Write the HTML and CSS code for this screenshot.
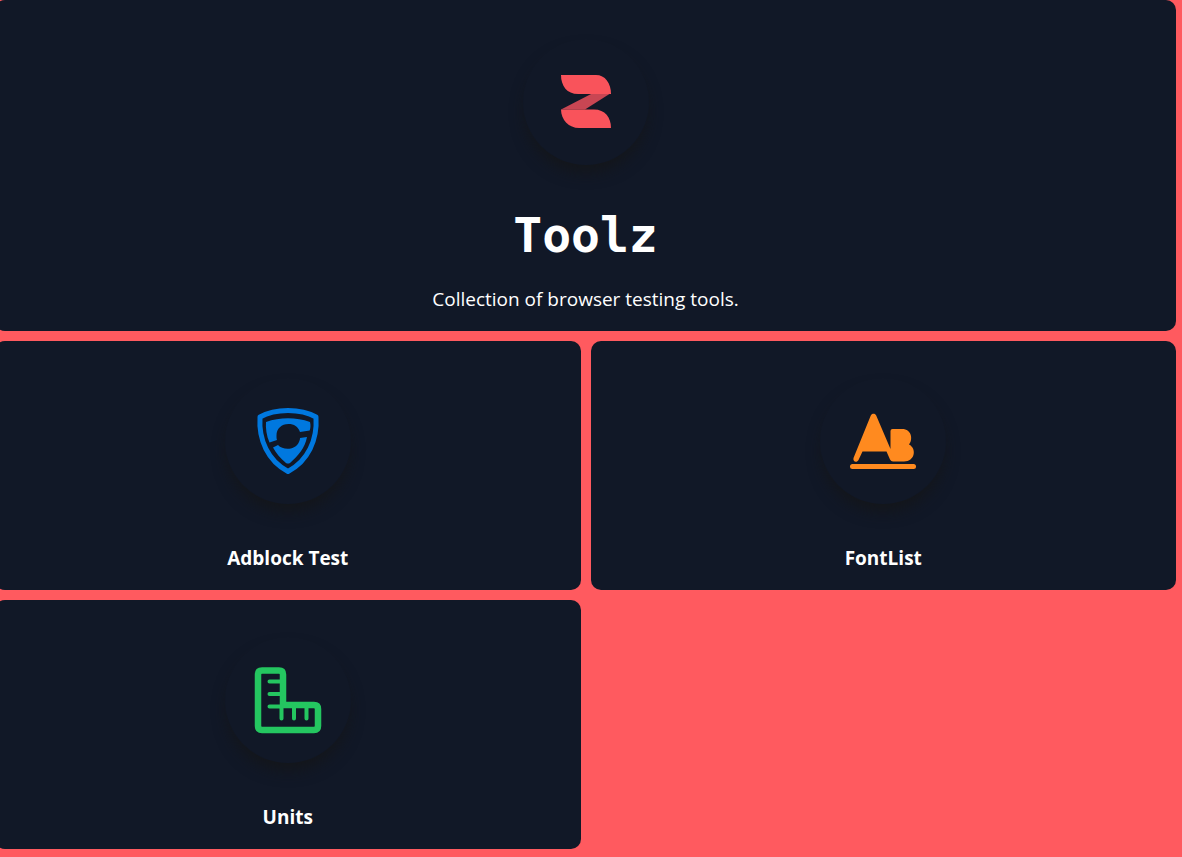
FILE: index.html
```html
<!DOCTYPE html>
<html lang="en">

<head>
  <meta charset="UTF-8">
  <meta name="viewport" content="width=device-width, initial-scale=1.0">
  <title>Toolz</title>
  <link rel="stylesheet" href="styles.css">
</head>

<body>
  <main class="grid">
    <header class="card hero">
      <div class="icon">
        <svg width="50" height="54" viewBox="0 0 50 54" aria-hidden="true">
          <path fill="#c94653" d="M32 18h18L24 34.500H0z" />
          <path fill="#f9535b" d="M0 0h35c9 0 15 8 15 19H17C6 19 0 11 0 0z" />
          <path fill="#f9535b" d="M0 34.500h33c11 0 17 8 17 18.500H18C8 53 0 45 0 34.500z" />
        </svg>
      </div>
      <h1>Toolz</h1>
      <p>Collection of browser testing tools.</p>
    </header>

    <a class="card tool" href="#adblock">
      <div class="icon">
        <svg width="68" height="68" viewBox="0 0 68 68" aria-hidden="true">
          <path fill="none" stroke="#0078df" stroke-width="5" stroke-linejoin="round"
            d="M34 3.500C24 3.500 14 5.500 6 10C4.500 33 14 54 34 64.500C54 54 63.500 33 62 10C54 5.500 44 3.500 34 3.500z" />
          <path fill="#0078df"
            d="M12 15c14-5 30-5 44 0 .8 3 .6 6-.3 8.500L46 25C44 19.500 40 17 34.500 17c-7 0-12 4.500-12 11.500 0 2 0 3 .5 4.500L15.500 35.500C12.500 29 11.500 21 12 15z" />
          <path fill="#0078df"
            d="M46 31l7-1C51 41 44 49 36 56q-2 1-4 0C26 51 22 46 19 40.500l5-2.500C29 43.500 41 43 44.500 36c1-2 1.500-3.500 1.500-5z" />
        </svg>
      </div>
      <h2>Adblock Test</h2>
    </a>

    <a class="card tool" href="#fontlist">
      <div class="icon">
        <svg width="68" height="68" viewBox="0 0 68 68" aria-hidden="true">
          <path fill="#ff8a1f"
            d="M21.800 8.500c1-2.500 4.400-2.500 5.400 0L41.500 42V24q0-2 2-2H53c10 0 11 11 7 15.500 8 4 6 17-5 17H44q-2 0-3-2L37.500 44.500H13.500L9.500 53c-1.500 3-6 2-5-2z" />
          <path fill="none" stroke="#ff8a1f" stroke-width="5" stroke-linecap="round" d="M3.500 59.500h61" />
        </svg>
      </div>
      <h2>FontList</h2>
    </a>

    <a class="card tool" href="#units">
      <div class="icon">
        <svg width="68" height="68" viewBox="0 0 68 68" aria-hidden="true">
          <g fill="none" stroke="#24c660" stroke-linecap="round" stroke-linejoin="round">
            <path stroke-width="6.500"
              d="M8 4.500h17q4 0 4 4V39h31q4 0 4 4v17q0 4-4 4H8q-4 0-4-4V8.500q0-4 4-4z" />
            <path stroke-width="4" d="M28 15.500H15.500M28 28H15.500M28 40.500H15.500M27.500 41v11.500M40 41v11.500M52.500 41v11.500" />
          </g>
        </svg>
      </div>
      <h2>Units</h2>
    </a>
  </main>
</body>

</html>
```
FILE: styles.css
```css
* {
  box-sizing: border-box;
}

body {
  margin: 0;
  font-family: "Segoe UI", "Open Sans", sans-serif;
  background-color: #ff5a5f;
  color: white;
}

.grid {
  display: grid;
  grid-template-columns: 1fr 1fr;
  gap: 10px;
  margin: 0 6px 0 -5px;
}

.card {
  display: flex;
  flex-direction: column;
  align-items: center;
  padding: 37px 20px 17px;
  background-color: #111827;
  border-radius: 10px;
  color: white;
  text-align: center;
  text-decoration: none;
}

.hero {
  grid-column: 1 / -1;
  padding-top: 39px;
}

.icon {
  display: flex;
  align-items: center;
  justify-content: center;
  width: 126px;
  height: 126px;
  border-radius: 50%;
  box-shadow: 0 10px 15px -3px #14161a;
}

h1 {
  margin: 42px 0 21px;
  font-family: "DejaVu Sans Mono", monospace;
  font-size: 48px;
  line-height: 56px;
}

p {
  margin: 0;
  font-size: 19px;
  line-height: 30px;
}

h2 {
  margin: 39px 0 0;
  font-size: 19px;
  font-weight: 700;
  line-height: 30px;
}
```
